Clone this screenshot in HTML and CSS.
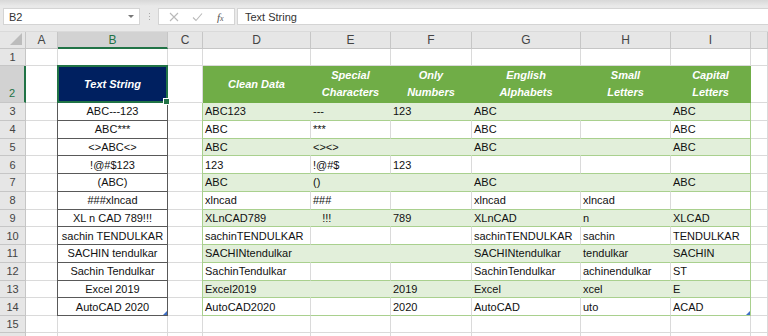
FILE: index.html
```html
<!DOCTYPE html>
<html lang="en">
<head>
    <meta charset="UTF-8">
    <title>Clean Data</title>
    <link rel="stylesheet" href="styles.css">
</head>
<body>
<div class="topbar">
    <div class="namebox"><span>B2</span><span class="caret"></span></div>
    <div class="grip"><i></i><i></i><i></i></div>
    <div class="fxbtns">
        <svg width="10" height="10" viewBox="0 0 10 10"><path d="M1 1L9 9M9 1L1 9" stroke="#b9b9b9" stroke-width="1.1" fill="none"/></svg>
        <svg width="11" height="10" viewBox="0 0 11 10"><path d="M1 5.5L4 8.5L10 1.5" stroke="#b9b9b9" stroke-width="1.1" fill="none"/></svg>
        <span class="fx">f<small>x</small></span>
    </div>
    <div class="formula">Text String</div>
</div>

<div class="sheet">
    <div class="row hdr">
        <div class="c corner"></div>
        <div class="c">A</div>
        <div class="c sel">B</div>
        <div class="c">C</div>
        <div class="c">D</div>
        <div class="c">E</div>
        <div class="c">F</div>
        <div class="c">G</div>
        <div class="c">H</div>
        <div class="c">I</div>
        <div class="c"></div>
    </div>
    <div class="row">
        <div class="c rh">1</div>
        <div class="c"></div><div class="c"></div><div class="c"></div><div class="c"></div><div class="c"></div>
        <div class="c"></div><div class="c"></div><div class="c"></div><div class="c"></div><div class="c"></div>
    </div>
    <div class="row tall">
        <div class="c rh sel">2</div>
        <div class="c"></div>
        <div class="c title">Text String</div>
        <div class="c"></div>
        <div class="c th first">Clean Data</div>
        <div class="c th">Special<br>Characters</div>
        <div class="c th">Only<br>Numbers</div>
        <div class="c th">English<br>Alphabets</div>
        <div class="c th">Small<br>Letters</div>
        <div class="c th last">Capital<br>Letters</div>
        <div class="c"></div>
    </div>
    <div class="row data band">
        <div class="c rh">3</div><div class="c"></div>
        <div class="c src">ABC---123</div><div class="c"></div>
        <div class="c td first">ABC123</div><div class="c td">---</div><div class="c td">123</div>
        <div class="c td">ABC</div><div class="c td"></div><div class="c td last">ABC</div>
        <div class="c"></div>
    </div>
    <div class="row data">
        <div class="c rh">4</div><div class="c"></div>
        <div class="c src">ABC***</div><div class="c"></div>
        <div class="c td first">ABC</div><div class="c td">***</div><div class="c td"></div>
        <div class="c td">ABC</div><div class="c td"></div><div class="c td last">ABC</div>
        <div class="c"></div>
    </div>
    <div class="row data band">
        <div class="c rh">5</div><div class="c"></div>
        <div class="c src">&lt;&gt;ABC&lt;&gt;</div><div class="c"></div>
        <div class="c td first">ABC</div><div class="c td">&lt;&gt;&lt;&gt;</div><div class="c td"></div>
        <div class="c td">ABC</div><div class="c td"></div><div class="c td last">ABC</div>
        <div class="c"></div>
    </div>
    <div class="row data">
        <div class="c rh">6</div><div class="c"></div>
        <div class="c src">!@#$123</div><div class="c"></div>
        <div class="c td first">123</div><div class="c td">!@#$</div><div class="c td">123</div>
        <div class="c td"></div><div class="c td"></div><div class="c td last"></div>
        <div class="c"></div>
    </div>
    <div class="row data band">
        <div class="c rh">7</div><div class="c"></div>
        <div class="c src">(ABC)</div><div class="c"></div>
        <div class="c td first">ABC</div><div class="c td">()</div><div class="c td"></div>
        <div class="c td">ABC</div><div class="c td"></div><div class="c td last">ABC</div>
        <div class="c"></div>
    </div>
    <div class="row data">
        <div class="c rh">8</div><div class="c"></div>
        <div class="c src">###xlncad</div><div class="c"></div>
        <div class="c td first">xlncad</div><div class="c td">###</div><div class="c td"></div>
        <div class="c td">xlncad</div><div class="c td">xlncad</div><div class="c td last"></div>
        <div class="c"></div>
    </div>
    <div class="row data band">
        <div class="c rh">9</div><div class="c"></div>
        <div class="c src">XL n CAD 789!!!</div><div class="c"></div>
        <div class="c td first">XLnCAD789</div><div class="c td">   !!!</div><div class="c td">789</div>
        <div class="c td">XLnCAD</div><div class="c td">n</div><div class="c td last">XLCAD</div>
        <div class="c"></div>
    </div>
    <div class="row data">
        <div class="c rh">10</div><div class="c"></div>
        <div class="c src">sachin TENDULKAR</div><div class="c"></div>
        <div class="c td first">sachinTENDULKAR</div><div class="c td"></div><div class="c td"></div>
        <div class="c td">sachinTENDULKAR</div><div class="c td">sachin</div><div class="c td last">TENDULKAR</div>
        <div class="c"></div>
    </div>
    <div class="row data band">
        <div class="c rh">11</div><div class="c"></div>
        <div class="c src">SACHIN tendulkar</div><div class="c"></div>
        <div class="c td first">SACHINtendulkar</div><div class="c td"></div><div class="c td"></div>
        <div class="c td">SACHINtendulkar</div><div class="c td">tendulkar</div><div class="c td last">SACHIN</div>
        <div class="c"></div>
    </div>
    <div class="row data">
        <div class="c rh">12</div><div class="c"></div>
        <div class="c src">Sachin Tendulkar</div><div class="c"></div>
        <div class="c td first">SachinTendulkar</div><div class="c td"></div><div class="c td"></div>
        <div class="c td">SachinTendulkar</div><div class="c td">achinendulkar</div><div class="c td last">ST</div>
        <div class="c"></div>
    </div>
    <div class="row data band">
        <div class="c rh">13</div><div class="c"></div>
        <div class="c src">Excel 2019</div><div class="c"></div>
        <div class="c td first">Excel2019</div><div class="c td"></div><div class="c td">2019</div>
        <div class="c td">Excel</div><div class="c td">xcel</div><div class="c td last">E</div>
        <div class="c"></div>
    </div>
    <div class="row data">
        <div class="c rh">14</div><div class="c"></div>
        <div class="c src end">AutoCAD 2020</div><div class="c"></div>
        <div class="c td first">AutoCAD2020</div><div class="c td"></div><div class="c td">2020</div>
        <div class="c td">AutoCAD</div><div class="c td">uto</div><div class="c td last end">ACAD</div>
        <div class="c"></div>
    </div>
    <div class="row">
        <div class="c rh">15</div>
        <div class="c"></div><div class="c"></div><div class="c"></div><div class="c"></div><div class="c"></div>
        <div class="c"></div><div class="c"></div><div class="c"></div><div class="c"></div><div class="c"></div>
    </div>
    <div class="row">
        <div class="c rh"></div>
        <div class="c"></div><div class="c"></div><div class="c"></div><div class="c"></div><div class="c"></div>
        <div class="c"></div><div class="c"></div><div class="c"></div><div class="c"></div><div class="c"></div>
    </div>
</div>
</body>
</html>
```

FILE: styles.css
```css
*{margin: 0; padding: 0; box-sizing: border-box}
html, body {
    width: 100%;
    height: 100%;
    overflow: hidden;
    background: #ffffff;
    font-family: "Liberation Sans", Arial, sans-serif;
    font-size: 11px;
    color: #111111;
}
/* Formula bar */
.topbar {
    height: 32px;
    display: flex;
    align-items: flex-start;
    padding: 8px 0 0 3px;
    background: linear-gradient(#d8d8d8, #e9e9e9 6px);
    border-bottom: 1px solid #dadada;
}
.namebox, .fxbtns, .formula {
    height: 17px;
    background: white;
    border: 1px solid #d4d4d4;
    display: flex;
    align-items: center;
}
.namebox {
    width: 137px;
    padding: 0 5px;
    justify-content: space-between;
    color: #333333;
}
.caret {
    width: 0;
    height: 0;
    border-left: 3px solid transparent;
    border-right: 3px solid transparent;
    border-top: 3px solid #777777;
}
.grip {
    width: 18px;
    height: 17px;
    display: flex;
    flex-direction: column;
    align-items: center;
    justify-content: center;
    gap: 2px;
}
.grip i {
    width: 1px;
    height: 1px;
    background: #aaaaaa;
}
.fxbtns {
    width: 77px;
    padding: 0 10px;
    gap: 13px;
}
.fx {
    font-family: "Liberation Serif", serif;
    font-style: italic;
    font-size: 11px;
    color: #555555;
    margin-left: 1px;
}
.fx small {
    font-size: 8px;
}
.formula {
    flex: 1;
    margin-left: 2px;
    padding: 0 7px;
    border-right: none;
    color: #333333;
}
/* Grid */
.row {
    display: grid;
    grid-template-columns: 26px 32px 110px 35px 108px 80px 81px 109px 90px 80px 1fr;
    height: 17px;
}
.tall { height: 37px; }
.data { height: 17.75px; }
.c {
    display: flex;
    align-items: center;
    white-space: pre;
    border-right: 1px solid #dadada;
    border-bottom: 1px solid #dadada;
    position: relative;
}
.hdr .c, .rh {
    background: #e6e6e6;
    color: #444444;
    justify-content: center;
    border-right-color: #c6c6c6;
    border-bottom-color: #c6c6c6;
    font-size: 12px;
}
.rh { font-size: 11px; }
.hdr .sel {
    background: #d2d2d2;
    color: #217346;
    border-bottom: 2px solid #217346;
}
.rh.sel {
    background: #d2d2d2;
    color: #217346;
    border-right: 2px solid #217346;
    align-items: flex-end;
    padding-bottom: 3px;
}
.corner::after {
    content: "";
    position: absolute;
    right: 3px;
    bottom: 3px;
    border-left: 12px solid transparent;
    border-bottom: 12px solid #bcbcbc;
}
/* Source column */
.title {
    background: #002060;
    color: white;
    font-weight: bold;
    font-style: italic;
    justify-content: center;
    border-right-color: #002060;
    border-bottom-color: #595959;
}
.title::after {
    content: "";
    position: absolute;
    left: -1px;
    top: -1px;
    right: -1px;
    bottom: -1px;
    border: 2px solid #217346;
}
.title::before {
    content: "";
    position: absolute;
    right: -3px;
    bottom: -3px;
    width: 5px;
    height: 5px;
    background: #217346;
    border: 1px solid white;
    z-index: 2;
}
.src {
    justify-content: center;
    border-right-color: #595959;
    border-bottom-color: #595959;
    box-shadow: -1px 0 0 #595959;
}
/* Result table */
.th {
    background: #70ad47;
    color: white;
    font-weight: bold;
    font-style: italic;
    justify-content: center;
    text-align: center;
    line-height: 17px;
    white-space: normal;
    border-right-color: #70ad47;
    border-bottom-color: #70ad47;
}
.td {
    padding-left: 2px;
    border-bottom-color: #a9d08e;
}
.band .td {
    background: #e2efda;
    border-right-color: #e2efda;
}
.td.first { box-shadow: -1px 0 0 #a9d08e; }
.th.last, .td.last, .band .td.last { border-right-color: #a9d08e; }
.th.last { border-right-color: #70ad47; }
.end::after {
    content: "";
    position: absolute;
    right: 0;
    bottom: 0;
    border-left: 4px solid transparent;
    border-bottom: 4px solid #3f6fc6;
}
```
